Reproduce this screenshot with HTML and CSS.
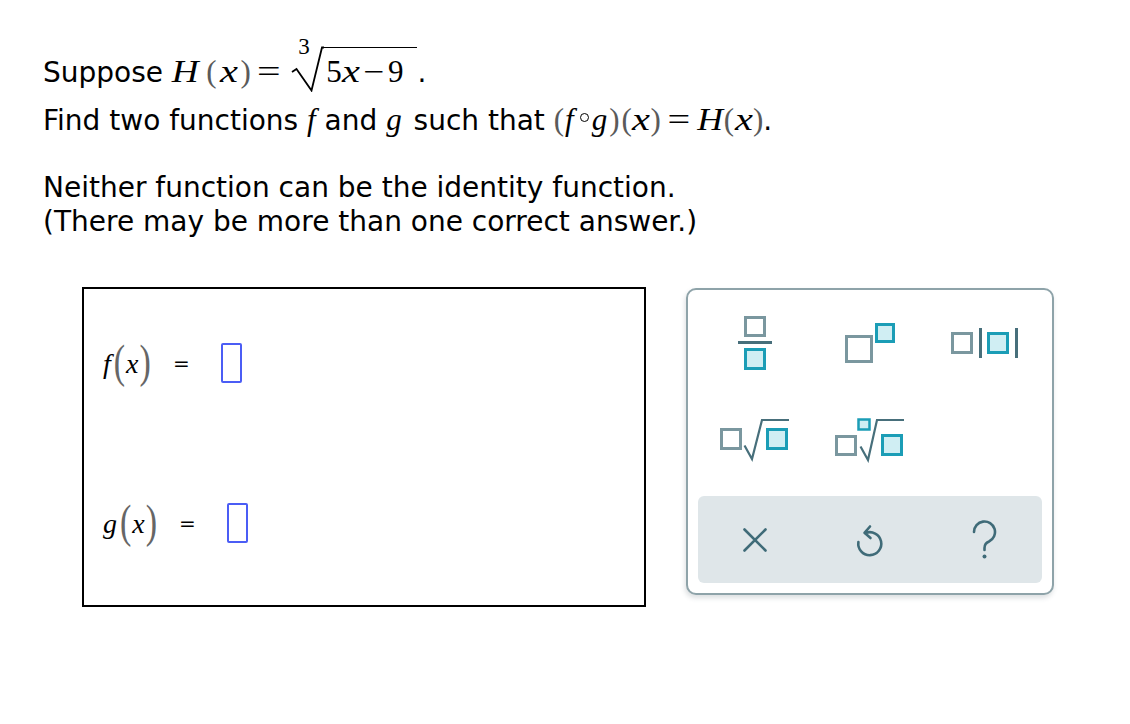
FILE: index.html
```html
<!DOCTYPE html>
<html lang="en">
<head>
<meta charset="utf-8">
<title>Composition of functions</title>
<link rel="stylesheet" href="styles.css">
</head>
<body>
<main class="page">
  <div class="intro">
    <div class="line">Suppose <span class="m"><i class="w h1">H</i><span class="p">(</span><i class="w x1">x</i><span class="p">)</span><span class="w eq1">=</span><span class="root"><span class="idx">3</span><svg class="rad" viewBox="0 0 34 46" aria-hidden="true"><path d="M2 26 L6.5 23 L21.5 44.5 L32 1.5 L34 1.5" fill="none" stroke="#000" stroke-width="1.8" stroke-linejoin="miter"/></svg><span class="radicand">5<i class="w rx">x</i><span class="w op">−</span>9</span></span></span>.</div>
    <div class="line">Find two functions <i class="mi">f</i> and <i class="mi mi-g">g</i> such that <span class="m"><span class="p">(</span><i class="fc">f</i><span class="comp"></span><i>g</i><span class="p pc">)</span><span class="p">(</span><i class="w x2">x</i><span class="p">)</span><span class="w eq2">=</span><i class="w h2">H</i><span class="p">(</span><i class="w x2">x</i><span class="p">)</span></span>.</div>
  </div>
  <div class="note">Neither function can be the identity function.<br>(There may be more than one correct answer.)</div>
  <div class="work">
    <div class="answers">
      <div class="arow"><span class="fn"><i>f</i><span class="bp">(</span><i class="ax">x</i><span class="bp">)</span></span><span class="aeq">=</span><span class="slot"></span></div>
      <div class="arow"><span class="fn"><i>g</i><span class="bp">(</span><i class="ax">x</i><span class="bp">)</span></span><span class="aeq">=</span><span class="slot"></span></div>
    </div>
    <div class="pad">
      <div class="keys">
        <button class="key" aria-label="fraction">
          <svg width="34" height="56" viewBox="0 0 34 56"><rect x="7.5" y="2.5" width="19" height="18" fill="none" stroke="#7a979f" stroke-width="3"/><rect x="0" y="26" width="34" height="3" fill="#476f7b"/><rect x="7.5" y="34.5" width="19" height="19" fill="#d0eef3" stroke="#1b9db6" stroke-width="3"/></svg>
        </button>
        <button class="key" aria-label="exponent">
          <svg width="52" height="42" viewBox="0 0 52 42"><rect x="2.5" y="14.5" width="25" height="25" fill="none" stroke="#7a979f" stroke-width="3"/><rect x="32.5" y="2.5" width="17" height="17" fill="#d0eef3" stroke="#1b9db6" stroke-width="3"/></svg>
        </button>
        <button class="key" aria-label="absolute value">
          <svg width="69" height="32" viewBox="0 0 69 32"><rect x="2.5" y="6.5" width="19" height="19" fill="none" stroke="#7a979f" stroke-width="3"/><rect x="29" y="1" width="3" height="30" fill="#476f7b"/><rect x="38.5" y="6.5" width="19" height="19" fill="#d0eef3" stroke="#1b9db6" stroke-width="3"/><rect x="65" y="1" width="3" height="30" fill="#476f7b"/></svg>
        </button>
        <button class="key" aria-label="square root">
          <svg width="72" height="44" viewBox="0 0 72 44"><rect x="2.5" y="11.5" width="19" height="19" fill="none" stroke="#7a979f" stroke-width="3"/><path d="M25.5 27.5 L33 41 L43 2 L70 2" fill="none" stroke="#476f7b" stroke-width="2.2"/><rect x="48.5" y="11.5" width="19" height="19" fill="#d0eef3" stroke="#1b9db6" stroke-width="3"/></svg>
        </button>
        <button class="key" aria-label="nth root">
          <svg width="72" height="46" viewBox="0 0 72 46"><rect x="2.5" y="19.5" width="19" height="18" fill="none" stroke="#7a979f" stroke-width="3"/><rect x="24.5" y="2.5" width="11" height="10" fill="#d0eef3" stroke="#1b9db6" stroke-width="2.5"/><path d="M26.5 29.5 L34 43 L43 3 L70 3" fill="none" stroke="#476f7b" stroke-width="2.2"/><rect x="48.5" y="18.5" width="19" height="19" fill="#d0eef3" stroke="#1b9db6" stroke-width="3"/></svg>
        </button>
        <span class="key empty"></span>
      </div>
      <div class="tools">
        <button class="key" aria-label="clear">
          <svg width="26" height="26" viewBox="0 0 26 26"><path d="M2.5 2.5 L23.5 23.5 M23.5 2.5 L2.5 23.5" fill="none" stroke="#3f6b78" stroke-width="2.6" stroke-linecap="round"/></svg>
        </button>
        <button class="key" aria-label="undo">
          <svg width="30" height="36" viewBox="0 0 30 36"><path d="M10.5 11 A11.5 11.5 0 1 1 3.4 20" fill="none" stroke="#3f6b78" stroke-width="2.6" stroke-linecap="round"/><path d="M15 4.5 L9.5 10.8 L15.5 16" fill="none" stroke="#3f6b78" stroke-width="2.6" stroke-linecap="round" stroke-linejoin="round"/></svg>
        </button>
        <button class="key" aria-label="help">
          <svg width="28" height="40" viewBox="0 0 28 40"><path d="M3 12 A10.5 10.5 0 1 1 18 21.5 C14.5 23 13.5 25 13.5 28 L13.5 30" fill="none" stroke="#3f6b78" stroke-width="2.6" stroke-linecap="round"/><circle cx="13.5" cy="36.5" r="2" fill="#3f6b78"/></svg>
        </button>
      </div>
    </div>
  </div>
</main>
</body>
</html>
```

FILE: styles.css
```css
* { box-sizing: border-box; }

body {
  margin: 0;
  background: #fff;
  color: #000;
  font-family: "DejaVu Sans", Verdana, sans-serif;
}

.page {
  padding: 46px 0 0 43px;
}

.intro {
  font-size: 28px;
  line-height: 48px;
}

.line {
  white-space: nowrap;
}

.m {
  font-family: "Liberation Serif", "Times New Roman", serif;
  font-size: 31px;
  line-height: 31px;
}

.m i,
.mi {
  font-style: italic;
}

.mi {
  font-family: "Liberation Serif", "Times New Roman", serif;
  font-size: 31px;
  line-height: 31px;
}

.mi-g {
  margin-right: 3px;
}

/* widened glyphs (TeX math fonts are wider than Times) */
.w {
  display: inline-block;
}

.h1 {
  transform: scaleX(1.2);
  margin: 0 10px 0 2px;
}

.x1 {
  transform: scaleX(1.3);
  margin: 0 5px 0 5px;
}

.eq1 {
  transform: scaleX(1.35);
  margin: 0 13px 0 9px;
}

.rx {
  transform: scaleX(1.3);
  margin-left: 2.5px;
}

.op {
  transform: scaleX(1.2);
  margin: 0 5.5px 0 7px;
}

.x2 {
  transform: scaleX(1.3);
  margin: 0 2.5px;
}

.eq2 {
  transform: scaleX(1.3);
  margin: 0 12px 0 9px;
}

.h2 {
  transform: scaleX(1.15);
  margin-right: 2px;
}

.p {
  color: #5a5a5a;
}

.pc {
  margin-left: 2px;
  margin-right: 2px;
}

.fc {
  margin: 0 4px 0 1px;
}

.root {
  position: relative;
  display: inline-block;
}

.idx {
  position: absolute;
  left: 8px;
  top: -11px;
  font-size: 23px;
  line-height: 1;
  font-style: normal;
}

.rad {
  width: 34px;
  height: 46px;
  vertical-align: -10px;
}

.radicand {
  display: inline-block;
  margin-left: -2px;
  border-top: 1.8px solid #000;
  padding: 8px 14px 0 4px;
  line-height: 31px;
}

.comp {
  display: inline-block;
  width: 9px;
  height: 9px;
  border: 1.4px solid #000;
  border-radius: 50%;
  margin: 0 3px 0 2px;
  vertical-align: 8px;
}

.note {
  margin-top: 26px;
  font-size: 28px;
  line-height: 34px;
}

.work {
  display: flex;
  align-items: flex-start;
  gap: 40px;
  margin: 48px 0 0 39px;
}

.answers {
  width: 564px;
  height: 320px;
  border: 2px solid #000;
  padding: 54px 0 0 19px;
  display: flex;
  flex-direction: column;
  gap: 120px;
}

.arow {
  display: flex;
  align-items: center;
  height: 40px;
}

.fn {
  font-family: "Liberation Serif", "Times New Roman", serif;
  font-size: 28px;
  line-height: 40px;
}

.fn i {
  font-style: italic;
}

.ax {
  margin: 0 1px;
}

.bp {
  display: inline-block;
  color: #666;
  font-size: 34px;
  transform: scaleY(1.35);
  margin-left: 3px;
}

.ax + .bp {
  margin-left: 0;
}

.aeq {
  font-family: "DejaVu Sans", sans-serif;
  font-size: 20px;
  margin: 0 31px 0 22px;
}

.slot {
  flex: none;
  width: 21px;
  height: 40px;
  border: 2px solid #4b5df5;
  border-radius: 2px;
}

.pad {
  width: 368px;
  height: 307px;
  margin-top: 1px;
  border: 2px solid #8ea3a9;
  border-radius: 10px;
  padding: 10px;
  box-shadow: -1px 3px 5px rgba(60, 80, 90, 0.18);
  background: #fff;
}

.keys {
  display: grid;
  grid-template-columns: repeat(3, 1fr);
  grid-auto-rows: 86px;
  row-gap: 11px;
}

.key {
  display: flex;
  align-items: center;
  justify-content: center;
  border: 0;
  background: transparent;
  padding: 0;
  margin: 0;
}

.tools {
  margin-top: 13px;
  height: 87px;
  border-radius: 6px;
  background: #dfe6e9;
  display: grid;
  grid-template-columns: repeat(3, 1fr);
}
```
